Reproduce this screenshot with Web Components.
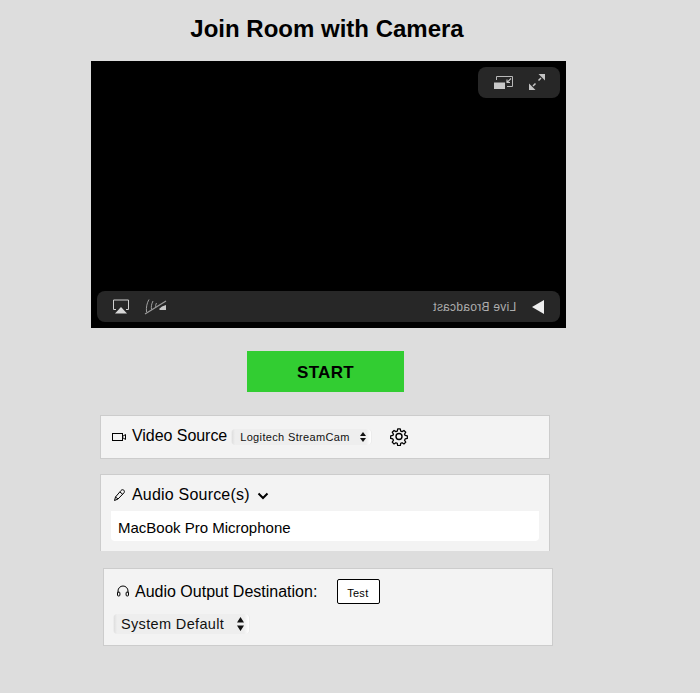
<!DOCTYPE html>
<html>
<head>
<meta charset="utf-8">
<title>Join Room with Camera</title>
<style>
html, body { margin: 0; padding: 0; }
body {
  background: #dddddd;
  color: #000;
  font-family: "Liberation Sans", Arial, sans-serif;
  height: 693px;
  overflow: hidden;
}
</style>
</head>
<body>
<join-page>
  <video-preview></video-preview>
  <start-button>START</start-button>

  <source-panel style="margin:23px 0 0 9px;height:42px">
    <div style="display:flex;align-items:center;height:42px;padding-left:10px">
      <svg width="17" height="16" viewBox="0 0 17 16" fill="none" stroke="#000" stroke-width="1" style="margin-right:4px">
        <rect x="1.500" y="4.500" width="10" height="7"/>
        <path d="M11.500 7.500l3-2v5l-3-2z"/>
      </svg>
      <span style="font-size:16px;margin-top:-3px;letter-spacing:-.05px">Video Source</span>
      <pick-list style="margin-left:5px;font-size:11px;letter-spacing:.35px;width:139px;height:16px;padding-left:8px"
        >Logitech StreamCam</pick-list>
      <svg width="20" height="20" viewBox="0 0 24 24" fill="none" stroke="#000" stroke-width="1.700" stroke-linejoin="round" style="margin-left:18px;margin-top:-2px">
        <path d="M10.300 2.500h3.400l.6 2.900 1.800.8 2.500-1.600 2.400 2.400-1.600 2.500.8 1.800 2.900.6v3.400l-2.900.6-.8 1.800 1.600 2.500-2.400 2.400-2.500-1.600-1.800.8-.6 2.900h-3.400l-.6-2.900-1.800-.8-2.500 1.600-2.400-2.400 1.600-2.500-.8-1.800-2.900-.6v-3.400l2.900-.6.8-1.800-1.600-2.500 2.400-2.400 2.500 1.600 1.800-.8z" transform="translate(1.200 1.200) scale(.9)"/>
        <circle cx="12" cy="12.600" r="3.600"/>
      </svg>
    </div>
  </source-panel>

  <source-panel noborderbottom style="margin:15px 0 0 9px;height:76px">
    <div style="display:flex;align-items:center;height:36px;padding-left:12px;padding-top:4px;box-sizing:border-box">
      <svg width="14" height="14" viewBox="0 0 14 14" fill="none" stroke="#000" stroke-width="1" style="margin-right:5px">
        <path d="M1.500 12.500l1-3.500 5.500-6.500c.9-1 2-1 2.800-.3s.8 1.900 0 2.800L5 11z"/>
        <path d="M2.500 9l2.500 2M7 4l2.800 2.400"/>
      </svg>
      <span style="font-size:16px;letter-spacing:.2px">Audio Source(s)</span>
      <svg width="12" height="8" viewBox="0 0 12 8" fill="none" stroke="#000" stroke-width="2" style="margin-left:7px;margin-top:1px">
        <path d="M1.500 1.500L6 6l4.500-4.500"/>
      </svg>
    </div>
    <div style="margin-left:10px;width:428px;height:30px;background:#fff;border-radius:0 0 4px 4px;box-sizing:border-box;padding-left:7px;font-size:15px;line-height:34px">MacBook Pro Microphone</div>
  </source-panel>

  <source-panel style="margin:17px 0 0 12px;height:76px">
    <div style="display:flex;align-items:center;height:44px;padding-left:12px">
      <svg width="14" height="14" viewBox="0 0 14 14" fill="none" stroke="#000" stroke-width="1" style="margin-right:5px">
        <path d="M2 9V7a5 5 0 0 1 10 0v2"/>
        <rect x="1.500" y="8" width="2.400" height="4" rx="1"/>
        <rect x="10.100" y="8" width="2.400" height="4" rx="1"/>
      </svg>
      <span style="font-size:16px;padding-top:2px">Audio Output Destination:</span>
      <test-button style="margin-left:20px">Test</test-button>
    </div>
    <pick-list style="margin:1px 0 0 10px;font-size:14.500px;letter-spacing:.35px;width:135px;height:20px;padding-left:7px" large>System Default</pick-list>
  </source-panel>
</join-page>

<script>
const pageTemplate = document.createElement('template');
pageTemplate.innerHTML = `
<style>
:host { display: block; width: 475px; margin-left: 91px; }
h1 {
  margin: 0;
  height: 61px;
  box-sizing: border-box;
  padding-top: 15px;
  text-align: center;
  font-size: 24px;
  line-height: 28px;
  font-weight: bold;
  width: 472px;
}
</style>
<h1>Join Room with Camera</h1>
<slot></slot>`;

class JoinPage extends HTMLElement {
  constructor() {
    super();
    this.attachShadow({mode: 'open'}).appendChild(pageTemplate.content.cloneNode(true));
  }
}
customElements.define('join-page', JoinPage);

const videoTemplate = document.createElement('template');
videoTemplate.innerHTML = `
<style>
:host { display: block; position: relative; width: 475px; height: 267px; background: #000; }
.bar {
  position: absolute;
  background: #272727;
  border-radius: 8px;
  display: flex;
  align-items: center;
  box-sizing: border-box;
}
.top { top: 6px; right: 6px; width: 82px; height: 31px; padding-left: 15px; gap: 14px; }
.bottom { left: 6px; right: 6px; bottom: 6px; height: 31px; padding: 0 16px 0 15px; }
.live {
  margin-left: auto;
  margin-right: 16px;
  font-size: 12px;
  letter-spacing: .27px;
  color: #adadad;
  transform: scaleX(-1);
}
svg { display: block; flex: none; }
</style>
<div class="bar top">
  <svg width="21" height="16" viewBox="0 0 21 16" fill="none">
    <path d="M3.500 5V1.500h16v10H14" stroke="#b9b9b9" stroke-width="1"/>
    <rect x="1" y="7.500" width="11" height="6.500" fill="#c8c8c8"/>
    <path d="M18 3.500L14 7.500M14 4.500V7.500h3" stroke="#c8c8c8" stroke-width="1.100"/>
  </svg>
  <svg width="18" height="18" viewBox="0 0 18 18" fill="none" stroke="#c4c4c4" stroke-width="1.500" style="margin-top:-1px">
    <path d="M5 13L7.500 10.500M10.500 7.500L13 5"/>
    <path d="M1 17V10.500l6.500 6.500z" fill="#c4c4c4" stroke="none"/>
    <path d="M17 1V7.500L10.500 1z" fill="#c4c4c4" stroke="none"/>
  </svg>
</div>
<div class="bar bottom">
  <svg width="18" height="15" viewBox="0 0 18 15" fill="none">
    <path d="M4 10.500H1.500V1h15v9.500H14" stroke="#d0d0d0" stroke-width="1"/>
    <path d="M9 8l6 6.500H3z" fill="#d8d8d8"/>
  </svg>
  <svg width="23" height="17" viewBox="0 0 23 17" fill="none" stroke="#a0a0a0" stroke-width="1" style="margin-left:14px">
    <path d="M5 1.500C3 5 2 9 2.500 14M9 3C7.500 6 7 8.500 7.500 11.500M12.500 5c-.8 1.500-1 3-.8 4.500"/>
    <path d="M15 11l3-2.500 4-1.500v5h-6z" fill="#c8c8c8" stroke="none"/>
    <path d="M1 16L22 3" stroke="#9a9a9a" stroke-width="1.300"/>
  </svg>
  <span class="live">Live Broadcast</span>
  <svg width="12" height="14" viewBox="0 0 12 14"><path d="M0 7L12 0v14z" fill="#eee"/></svg>
</div>`;

class VideoPreview extends HTMLElement {
  constructor() {
    super();
    this.attachShadow({mode: 'open'}).appendChild(videoTemplate.content.cloneNode(true));
  }
}
customElements.define('video-preview', VideoPreview);

const startTemplate = document.createElement('template');
startTemplate.innerHTML = `
<style>
:host {
  display: flex;
  align-items: center;
  justify-content: center;
  width: 157px;
  height: 41px;
  box-sizing: border-box;
  padding-top: 2px;
  margin: 23px 0 0 156px;
  background: #32cd32;
  font-size: 17px;
  font-weight: bold;
  letter-spacing: .3px;
  cursor: pointer;
}
</style>
<slot></slot>`;

class StartButton extends HTMLElement {
  constructor() {
    super();
    this.attachShadow({mode: 'open'}).appendChild(startTemplate.content.cloneNode(true));
  }
}
customElements.define('start-button', StartButton);

const panelTemplate = document.createElement('template');
panelTemplate.innerHTML = `
<style>
:host {
  display: block;
  background: #f3f3f3;
  border: 1px solid #cccccc;
  box-sizing: content-box;
  width: 448px;
}
:host([noborderbottom]) { border-bottom: 0; }
</style>
<slot></slot>`;

class SourcePanel extends HTMLElement {
  constructor() {
    super();
    this.attachShadow({mode: 'open'}).appendChild(panelTemplate.content.cloneNode(true));
  }
}
customElements.define('source-panel', SourcePanel);

const pickTemplate = document.createElement('template');
pickTemplate.innerHTML = `
<style>
:host {
  display: inline-flex;
  align-items: center;
  box-sizing: border-box;
  background: linear-gradient(90deg, #dedede, #eeeeee 3px, #eeeeee calc(100% - 5px), #ffffff);
  border-radius: 4px;
  color: #111;
  box-shadow: -1px 0 1px -1px #aaa, 1px 0 1px -1px #aaa;
  white-space: nowrap;
}
span { flex: 1; }
svg { display: block; margin-right: 5px; }
:host([large]) svg { margin-right: 5px; width: 7px; height: 14px; }
</style>
<span><slot></slot></span>
<svg width="6" height="10" viewBox="0 0 6 10" preserveAspectRatio="none"><path d="M3 0l3 4H0zM3 10l3-4H0z" fill="#111"/></svg>`;

class PickList extends HTMLElement {
  constructor() {
    super();
    this.attachShadow({mode: 'open'}).appendChild(pickTemplate.content.cloneNode(true));
  }
}
customElements.define('pick-list', PickList);

const testTemplate = document.createElement('template');
testTemplate.innerHTML = `
<style>
:host {
  display: inline-flex;
  align-items: center;
  justify-content: center;
  width: 43px;
  height: 25px;
  box-sizing: border-box;
  background: #fff;
  border: 1px solid #000;
  border-radius: 2px;
  font-size: 11px;
  letter-spacing: .3px;
  padding: 3px 2px 0 0;
}
</style>
<slot></slot>`;

class TestButton extends HTMLElement {
  constructor() {
    super();
    this.attachShadow({mode: 'open'}).appendChild(testTemplate.content.cloneNode(true));
  }
}
customElements.define('test-button', TestButton);
</script>
</body>
</html>
